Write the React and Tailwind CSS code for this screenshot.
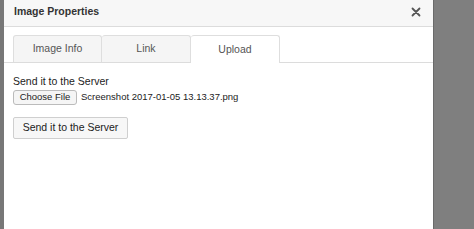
import React from "react";

export default function App() {
  const font = { fontFamily: '"Liberation Sans", Arial, sans-serif' };
  return (
    <div className="w-[474px] h-[229px] bg-[#7d7d7d] flex overflow-hidden relative" style={font}>
      <div className="w-[4px] shrink-0 bg-[#777]" />
      <div className="w-[430px] shrink-0 bg-white flex flex-col border-r border-[#6a6a6a]">
        <div className="h-[27px] shrink-0 bg-[#f7f7f7] border-b border-[#dcdcdc] flex items-center justify-between pl-[10px] pr-[12px] pb-[3px]">
          <span className="text-[10.5px] font-bold text-[#333]">Image Properties</span>
          <svg width="10" height="10" viewBox="0 0 10 10">
            <path d="M1.5 1.5 L8.5 8.5 M8.5 1.5 L1.5 8.5" stroke="#555" strokeWidth="1.8" strokeLinecap="round" />
          </svg>
        </div>
        <div className="pt-[8px] flex border-b border-[#dcdcdc] pl-[9px]">
          <div className="w-[89px] h-[27px] bg-[#f5f5f5] border border-b-0 border-[#dedede] rounded-t-[3px] flex items-center justify-center text-[10.5px] text-[#555]">Image Info</div>
          <div className="w-[89px] h-[27px] bg-[#f5f5f5] border border-b-0 border-l-0 border-[#dedede] rounded-t-[3px] flex items-center justify-center text-[10.5px] text-[#555]">Link</div>
          <div className="w-[89px] h-[28px] -mb-px bg-white border border-b-0 border-l-0 border-[#dedede] rounded-t-[3px] flex items-center justify-center text-[10.5px] text-[#555]">Upload</div>
        </div>
        <div className="pl-[9px] pt-[12px] flex flex-col">
          <div className="text-[10.5px] text-[#222] leading-[13px]">Send it to the Server</div>
          <div className="flex items-center mt-[2px]">
            <div className="w-[64px] h-[15px] border border-[#bbb] rounded-[3px] bg-[#f5f5f5] flex items-center justify-center text-[9.5px] text-[#222]">Choose File</div>
            <span className="ml-[4px] text-[9.5px] text-[#222]">Screenshot 2017-01-05 13.13.37.png</span>
          </div>
          <div className="mt-[12px] w-[115px] h-[22px] border border-[#cfcfcf] rounded-[2px] bg-[#f7f7f7] flex items-center justify-center text-[10.5px] text-[#222]">Send it to the Server</div>
        </div>
      </div>
      <div className="flex-1 bg-[#7f7f7f]" />
    </div>
  );
}
